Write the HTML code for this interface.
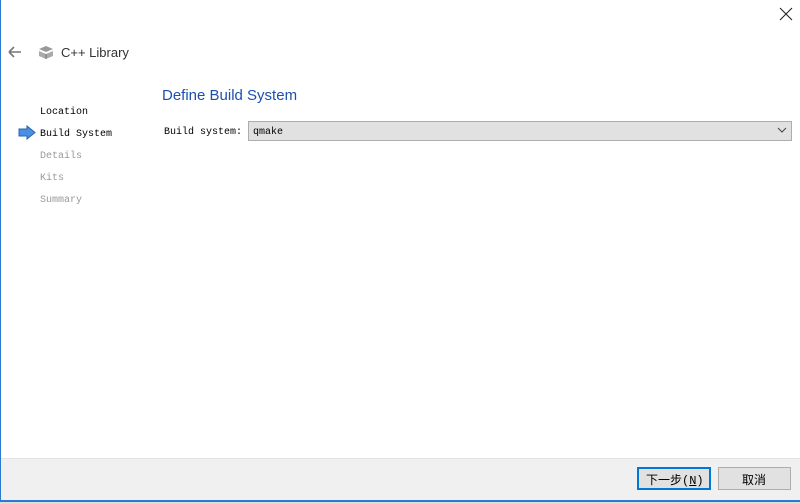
<!DOCTYPE html>
<html><head><meta charset="utf-8"><style>
body{margin:0;width:800px;height:504px;background:#fff;position:relative;overflow:hidden;font-family:"Liberation Sans",sans-serif}
.abs{position:absolute}
.mono{font-family:"Liberation Mono","Noto Sans CJK SC",monospace;font-size:10px;white-space:nowrap}
</style></head><body>
<div class="abs" style="left:1px;top:458px;width:799px;height:42px;background:#f0f0f0;border-top:1px solid #e3e3e3"></div>
<div class="abs" style="left:0;top:500px;width:800px;height:2px;background:#2b79d0"></div>
<div class="abs" style="left:0;top:502px;width:800px;height:2px;background:#dcdcdc"></div>
<div class="abs" style="left:0;top:0;width:1px;height:502px;background:#2b79d0"></div>
<svg class="abs" style="left:779px;top:7px" width="14" height="14"><path d="M1 1L13 13M13 1L1 13" stroke="#222" stroke-width="1.1"/></svg>
<svg class="abs" style="left:8px;top:45px" width="14" height="14"><path d="M1 7H13M1 7L6 2M1 7L6 12" stroke="#777" stroke-width="1.6" fill="none"/></svg>
<svg class="abs" style="left:38px;top:45px" width="16" height="16"><path d="M8 1L15 4L8 7L1 4Z" fill="#999"/><path d="M1 6L8 9L15 6V11L8 14L1 11Z" fill="#aaa"/><path d="M8 9V14" stroke="#777"/></svg>
<div class="abs" style="left:61px;top:45px;font-size:13px;color:#333">C++ Library</div>
<div class="abs" style="left:162px;top:87px;font-size:15px;color:#1d4fb0">Define Build System</div>
<div class="abs mono" style="left:40px;top:107px;color:#000">Location</div>
<svg class="abs" style="left:18px;top:125px" width="18" height="15"><path d="M1 4H9V1L17 7.5L9 14V11H1Z" fill="#4a90e2" stroke="#2a63b0"/></svg>
<div class="abs mono" style="left:40px;top:129px;color:#000">Build System</div>
<div class="abs mono" style="left:40px;top:151px;color:#999">Details</div>
<div class="abs mono" style="left:40px;top:173px;color:#999">Kits</div>
<div class="abs mono" style="left:40px;top:195px;color:#999">Summary</div>
<div class="abs mono" style="left:164px;top:127px;color:#000">Build system:</div>
<div class="abs" style="left:248px;top:121px;width:542px;height:18px;background:#e1e1e1;border:1px solid #adadad"></div>
<div class="abs mono" style="left:253px;top:127px;color:#000">qmake</div>
<svg class="abs" style="left:777px;top:127px" width="10" height="7"><path d="M1 1L5 5L9 1" stroke="#444" fill="none"/></svg>
<div class="abs" style="left:637px;top:467px;width:70px;height:19px;background:#e1e1e1;border:2px solid #0078d7"></div>
<div class="abs mono" style="left:646px;top:471px;font-size:12px;color:#000">下一步(<u>N</u>)</div>
<div class="abs" style="left:718px;top:467px;width:71px;height:21px;background:#e1e1e1;border:1px solid #adadad"></div>
<div class="abs mono" style="left:742px;top:471px;font-size:12px;color:#000">取消</div>
</body></html>
